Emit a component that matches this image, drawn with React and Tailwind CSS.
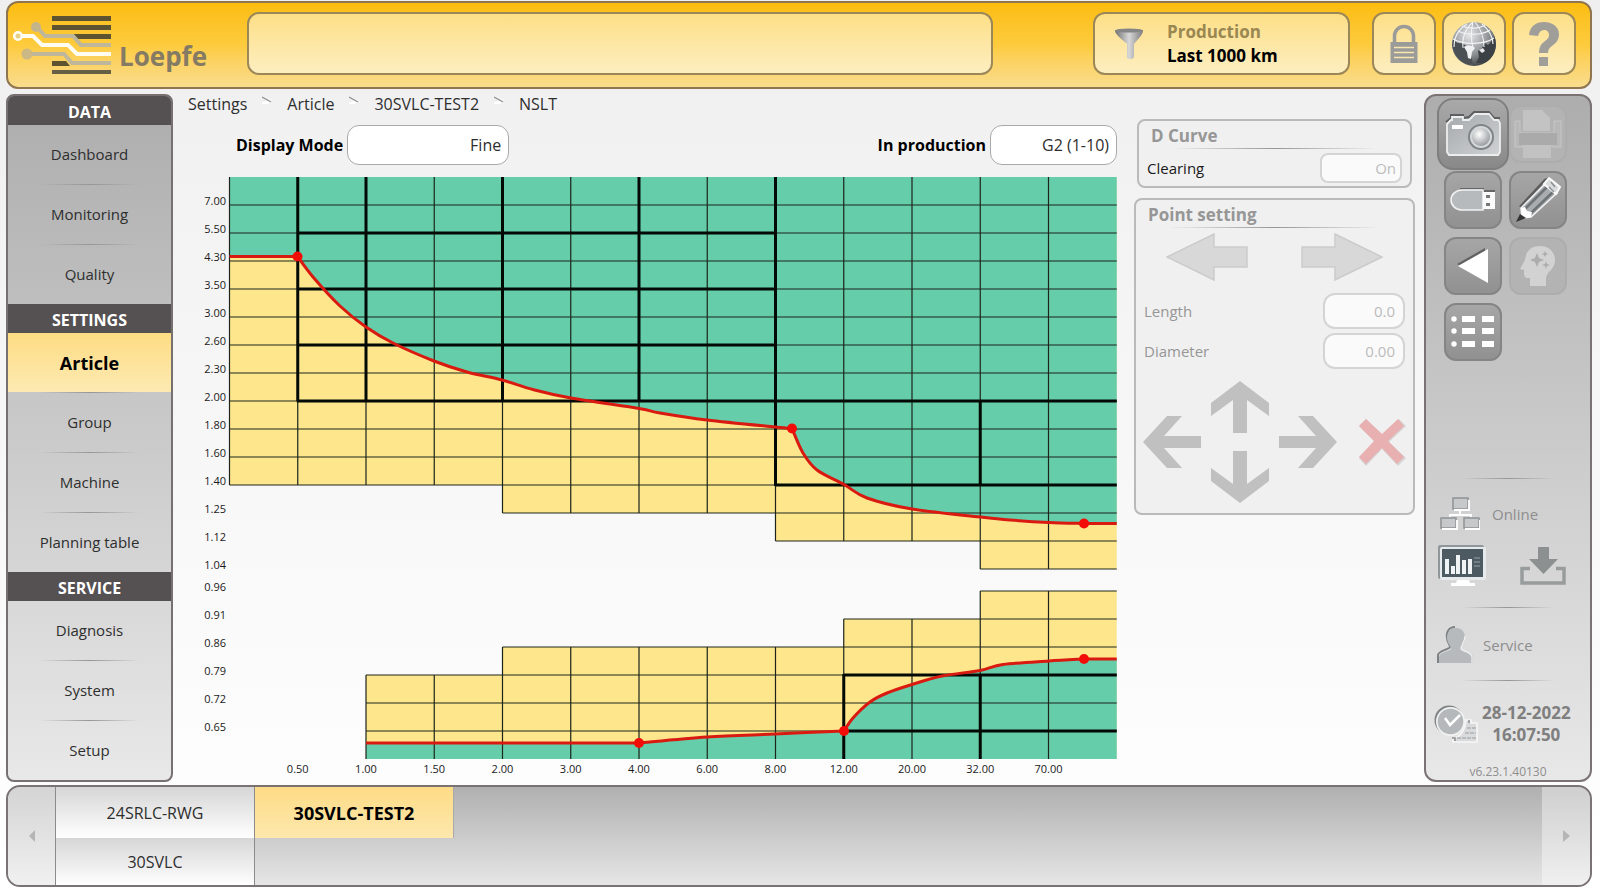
import React, { useState } from 'react';

const NAV = [
    { title: 'DATA', items: ['Dashboard', 'Monitoring', 'Quality'] },
    { title: 'SETTINGS', items: ['Article', 'Group', 'Machine', 'Planning table'] },
    { title: 'SERVICE', items: ['Diagnosis', 'System', 'Setup'] },
];

const CRUMBS = ['Settings', 'Article', '30SVLC-TEST2', 'NSLT'];

// Chart grid: 13 columns, 28 units per row
const colX = (i) => 41.5 + i * 68.25;
const upY = (i) => i * 28;
const lowY = (i) => 414 + i * 28;
const RIGHT = colX(13);
const BOTTOM = lowY(6);

const UPPER_LABELS = ['7.00', '5.50', '4.30', '3.50', '3.00', '2.60', '2.30', '2.00', '1.80', '1.60', '1.40', '1.25', '1.12', '1.04'];
const LOWER_LABELS = ['0.96', '0.91', '0.86', '0.79', '0.72', '0.65'];
const LENGTH_LABELS = ['0.50', '1.00', '1.50', '2.00', '3.00', '4.00', '6.00', '8.00', '12.00', '20.00', '32.00', '70.00'];

// first column, last column, rows
const UPPER_STEPS = [[0, 4, 11], [4, 8, 12], [8, 11, 13], [11, 13, 14]];
const LOWER_STEPS = [[2, 4, 3], [4, 9, 2], [9, 11, 1], [11, 13, 0]];

const UPPER_CURVE = [
    [[41.5, 79.5], [109.5, 79.5]],
    [[109.5, 79.5], [125, 100], [152, 129], [178, 150], [205, 166], [246, 184], [279, 195], [314, 203], [345, 212.5], [383, 221], [451, 231.5], [472, 236], [519, 243], [587, 250], [604, 251.5]],
    [[604, 251.5], [615, 276], [629, 293], [656, 307.5], [679, 321], [724, 332], [792, 340], [822, 343], [861, 345.5], [896, 346.5]],
    [[896, 346.5], [RIGHT, 346.5]],
];
const LOWER_CURVE = [
    [[178, 566], [451, 566]],
    [[451, 566], [519, 560], [587, 557], [656, 554]],
    [[656, 554], [665, 541], [682, 525], [699, 516], [724, 507.5], [754, 499], [792, 493.5], [815, 487.5], [861, 484], [896, 482]],
    [[896, 482], [RIGHT, 482]],
];

const curvePath = (segments) => {
    let d = `M${segments[0][0].join(' ')}`;
    segments.forEach((pts) => {
        for (let i = 0; i < pts.length - 1; i++) {
            const p0 = pts[i - 1] || pts[i];
            const p1 = pts[i];
            const p2 = pts[i + 1];
            const p3 = pts[i + 2] || p2;
            d += ` C${p1[0] + (p2[0] - p0[0]) / 6} ${p1[1] + (p2[1] - p0[1]) / 6} ${p2[0] - (p3[0] - p1[0]) / 6} ${p2[1] - (p3[1] - p1[1]) / 6} ${p2[0]} ${p2[1]}`;
        }
    });
    return d;
};

const upperPath = curvePath(UPPER_CURVE);
const lowerPath = curvePath(LOWER_CURVE);

const Chart = () => {
    const thin = [];
    UPPER_STEPS.forEach(([from, to, rows]) => {
        for (let c = from; c < to; c++) thin.push(`M${colX(c)} 0V${upY(rows)}`);
        for (let r = 1; r <= rows; r++) thin.push(`M${colX(from)} ${upY(r)}H${colX(to)}`);
    });
    LOWER_STEPS.forEach(([from, to, top]) => {
        for (let c = from; c < to; c++) thin.push(`M${colX(c)} ${lowY(top)}V${BOTTOM}`);
        for (let r = top; r < 6; r++) thin.push(`M${colX(from)} ${lowY(r)}H${colX(to)}`);
    });
    const thick = [
        ...[1, 2, 4, 6].map((c) => `M${colX(c)} 0V${upY(8)}`),
        `M${colX(8)} 0V${upY(11) + 1}`,
        ...[2, 4, 6].map((r) => `M${colX(1)} ${upY(r)}H${colX(8)}`),
        `M${colX(1) - 1} ${upY(8)}H${RIGHT}`,
        `M${colX(8)} ${upY(11)}H${RIGHT}`,
        `M${colX(11)} ${upY(8)}V${upY(11)}`,
        `M${colX(9)} ${lowY(3) - 1}V${BOTTOM}`,
        `M${colX(11)} ${lowY(3)}V${BOTTOM}`,
        `M${colX(9)} ${lowY(3)}H${RIGHT}`,
        `M${colX(9)} ${lowY(5)}H${RIGHT}`,
    ];

    return (
        <svg viewBox="0 0 929 602" className="w-full block" role="img" aria-label="Clearing chart">
            {UPPER_STEPS.map(([from, to, rows]) => (
                <rect key={from} x={colX(from)} y="0" width={colX(to) - colX(from)} height={upY(rows)} fill="#fde68c" />
            ))}
            {LOWER_STEPS.map(([from, to, top]) => (
                <rect key={from} x={colX(from)} y={lowY(top)} width={colX(to) - colX(from)} height={BOTTOM - lowY(top)} fill="#fde68c" />
            ))}
            <path d={`${upperPath} V0 H41.5 Z`} fill="#66cdaa" />
            <path d={`${lowerPath} V${BOTTOM} H178 Z`} fill="#66cdaa" />
            <path d={thin.join('')} stroke="#1c241c" strokeWidth="1.2" fill="none" />
            <path d={thick.join('')} stroke="#030a06" strokeWidth="3" fill="none" />
            <g stroke="#d91a10" strokeWidth="3" fill="none" strokeLinejoin="round">
                <path d={upperPath} />
                <path d={lowerPath} />
            </g>
            {[[109.5, 79.5], [604, 251.5], [896, 346.5], [451, 566], [656, 554], [896, 482]].map(([x, y]) => (
                <circle key={`${x}-${y}`} cx={x} cy={y} r="5" fill="#f20d08" />
            ))}
            <g fontSize="11" fill="#1a1a1a">
                {UPPER_LABELS.map((t, i) => <text key={t} x="38" y={upY(i + 1)} textAnchor="end">{t}</text>)}
                {LOWER_LABELS.map((t, i) => <text key={t} x="38" y={lowY(i)} textAnchor="end">{t}</text>)}
                {LENGTH_LABELS.map((t, i) => <text key={t} x={colX(i + 1)} y="596" textAnchor="middle">{t}</text>)}
            </g>
        </svg>
    );
};

const Logo = () => (
    <svg width="100" height="64" viewBox="0 0 100 64" className="shrink-0">
        <g fill="#5e5330">
            <rect x="40" y="4" width="59" height="5" />
            <rect x="40" y="13" width="59" height="5" />
            <path d="M61 22h38v5H65z" />
            <path d="M40 49h14l4 5H40z" />
            <rect x="40" y="58" width="59" height="4" fill="#655f45" />
        </g>
        <g fill="none" stroke="#bfb79c" strokeWidth="4">
            <path d="M25 15l8 9h28l8 9h30" />
            <path d="M18 42h34l8 9h39" />
        </g>
        <circle cx="24" cy="15" r="5" fill="#c4b48a" />
        <circle cx="15" cy="42" r="5.5" fill="#cbb884" />
        <path d="M8 24h13l9 9h26l9 9h34" fill="none" stroke="#fffdf2" strokeWidth="4" />
        <circle cx="6" cy="24" r="3.8" fill="#e8cf86" stroke="#fffdf2" strokeWidth="2.6" />
    </svg>
);

const FunnelIcon = () => (
    <svg width="28" height="32" viewBox="0 0 28 32">
        <defs>
            <linearGradient id="funnel" x1="0" x2="1">
                <stop offset="0" stopColor="#6f6f6f" />
                <stop offset="0.5" stopColor="#d8d8d8" />
                <stop offset="1" stopColor="#7c7c7c" />
            </linearGradient>
        </defs>
        <path d="M0 2h28c0 4-3 7-9 14v12c0 2-1 3-3 3s-4 0-4-2V16C4 9 0 6 0 2z" fill="url(#funnel)" />
        <ellipse cx="14" cy="2.5" rx="13.5" ry="2" fill="#858585" />
    </svg>
);

const LockIcon = () => (
    <svg width="28" height="40" viewBox="0 0 28 40">
        <path d="M4.500 19V12a9.500 9.500 0 0 1 19 0v7" fill="none" stroke="#9b9b99" strokeWidth="3.500" />
        <rect x="0.500" y="18" width="27" height="21" fill="#9b9b99" />
        <path d="M4 23.500h20M4 28.500h20M4 33.500h20" stroke="#f8e7ae" strokeWidth="1.600" />
    </svg>
);

const GlobeIcon = () => (
    <svg width="46" height="46" viewBox="0 0 46 46">
        <defs>
            <radialGradient id="globe" cx="0.4" cy="0.3" r="0.8">
                <stop offset="0" stopColor="#e4e6e7" />
                <stop offset="0.55" stopColor="#8e9295" />
                <stop offset="1" stopColor="#2d3236" />
            </radialGradient>
        </defs>
        <circle cx="23" cy="23" r="22" fill="url(#globe)" />
        <path d="M2 18c2 2 4 5 8 4l6 3 4 9 2 9-6 0C8 40 2 33 1 24z" fill="#4b5054" />
        <path d="M25 42l3-6-1-6 4-3 3-5 3 2 3-3 3-6c4 9 1 18-4 23-3 3-7 5-11 4z" fill="#3c4145" />
        <path d="M13 26c3-2 7-2 11 1l-3 4-1 7-3-1-1-6z" fill="#f0f1f2" />
        <path d="M28 29l4-2 2 3-3 2z" fill="#e8eaeb" />
        <g fill="none" stroke="#f2f3f4" strokeWidth="1.100">
            <path d="M7 10c8 4 23 5 32-1M2 18c11 6 31 6 41-1M11 5c7 3 17 3 23-1" />
            <path d="M22 1c-8 7-11 16-10 26M22 1c-2 8-2 18 0 26M24 1c6 7 9 16 9 25M16 3C8 8 3 16 3 26M31 3c7 6 11 12 11 20" />
        </g>
    </svg>
);

const HelpIcon = () => (
    <svg width="30" height="44" viewBox="0 0 30 44">
        <path d="M0 13C1 4 7 0 15 0c9 0 15 5 15 12 0 6-3 9-7 12-3 2-4 4-4 7h-9c0-6 2-9 6-12 3-2 4-4 4-6 0-3-2-5-5-5s-5 2-6 6z" fill="#a09e99" />
        <rect x="10" y="35" width="9" height="9" fill="#a09e99" />
    </svg>
);

const CameraIcon = () => (
    <svg width="56" height="46" viewBox="0 0 56 46">
        <defs>
            <linearGradient id="cam" x1="0" x2="1" y2="1">
                <stop offset="0" stopColor="#a5a9ac" />
                <stop offset="1" stopColor="#d0d2d4" />
            </linearGradient>
            <radialGradient id="lens" cx="0.4" cy="0.35" r="0.7">
                <stop offset="0" stopColor="#fff" />
                <stop offset="1" stopColor="#93989b" />
            </radialGradient>
        </defs>
        <path d="M1 11l5-4V4h12v3l6-1 5-5h15l5 6h6" fill="none" stroke="#5d5f61" strokeWidth="2" />
        <path d="M2 13l4-4h1V6h11v3h6l6-6h14l5 6h4l2 3v29l-2 3H4l-2-3z" fill="url(#cam)" stroke="#eceded" strokeWidth="1.800" />
        <rect x="7" y="14" width="11" height="4" fill="#fff" />
        <circle cx="36" cy="26" r="13" fill="#7f8487" />
        <circle cx="36" cy="26" r="11" fill="#d5d8da" />
        <circle cx="36" cy="26" r="9" fill="url(#lens)" />
    </svg>
);

const PrinterIcon = () => (
    <svg width="48" height="50" viewBox="0 0 48 50" className="opacity-60">
        <path d="M9 22V1h19l8 8v13" fill="#cfcfcf" />
        <path d="M1 12h5v12h34V12h7v26h-9v-4H9v4H1z" fill="#bcbcbc" stroke="#d4d4d4" />
        <rect x="5" y="24" width="38" height="12" fill="#a5a5a5" />
        <path d="M9 36h28v13H9z" fill="#cccccc" />
    </svg>
);

const UsbIcon = () => (
    <svg width="46" height="24" viewBox="0 0 46 24">
        <path d="M10 0h23v3h12" fill="none" stroke="#666" strokeWidth="2" />
        <path d="M33 2v20H13C5 22 1 17 1 12S5 2 13 2z" fill="#b7babc" stroke="#f1f1f1" strokeWidth="1.600" />
        <rect x="33" y="4" width="12" height="17" fill="#fbfbfb" />
        <rect x="36" y="7" width="4" height="3" fill="#777" />
        <rect x="36" y="15" width="4" height="3" fill="#777" />
    </svg>
);

const PencilIcon = () => (
    <svg width="46" height="46" viewBox="0 0 46 46">
        <path d="M5 30L30 3l5-2" fill="none" stroke="#5c5c5c" strokeWidth="2.500" />
        <path d="M6 31L31 6l11 10-26 24-9 1z" fill="#a9adb0" stroke="#f3f3f3" strokeWidth="1.500" />
        <path d="M10 32L33 9M15 37l24-23" stroke="#6e7376" strokeWidth="2.500" />
        <path d="M29 7l5-6 11 9-4 7z" fill="#d9dbdc" stroke="#fafafa" strokeWidth="2" />
        <path d="M34 10l5 5M36 5l4 5" stroke="#8b8f92" strokeWidth="1.500" />
        <path d="M6 31l4-1 2 4 5 1-1 5-9 1z" fill="#fff" />
        <path d="M1 45l4-8 6 4z" fill="#333" />
    </svg>
);

const BackIcon = () => (
    <svg width="32" height="36" viewBox="0 0 32 36">
        <path d="M0 16L28 0v4L4 18z" fill="#616161" />
        <path d="M1 18L31 1v34z" fill="#fff" />
    </svg>
);

const HeadIcon = () => (
    <svg width="36" height="42" viewBox="0 0 36 42">
        <path d="M10 41v-8H6l-2-3v-5l-4-1 5-9C6 5 12 1 20 1c10 0 15 7 15 14 0 6-3 9-7 13l-2 4v9z" fill="#d2d2d2" />
        <path d="M17 8l2 5 5 2-5 2-2 5-2-5-5-2 5-2zM26 16l1 3 3 1-3 1-1 3-1-3-3-1 3-1zM25 6l1 2 2 1-2 1-1 2-1-2-2-1 2-1z" fill="#acacac" />
    </svg>
);

const ListIcon = () => (
    <svg width="44" height="34" viewBox="0 0 44 34" fill="#fff">
        {[4, 16, 29].map((y) => (
            <g key={y}>
                <circle cx="3" cy={y} r="2.700" />
                <rect x="11" y={y - 3} width="13" height="6" />
                <rect x="31" y={y - 3} width="12" height="6" />
            </g>
        ))}
    </svg>
);

const NetworkIcon = () => (
    <svg width="40" height="34" viewBox="0 0 40 34">
        <g fill="#c6c8c9" stroke="#8f9294" strokeWidth="1.500">
            <rect x="13" y="1" width="15" height="11" />
            <rect x="1" y="21" width="15" height="10" />
            <rect x="24" y="21" width="15" height="10" />
        </g>
        <path d="M20 14v4M10 20v-2h21v2M14 13h15V3M2 32h15v-9M25 32h15v-9" fill="none" stroke="#fff" strokeWidth="1.800" />
    </svg>
);

const MonitorIcon = () => (
    <svg width="48" height="42" viewBox="0 0 48 42">
        <rect x="0" y="0" width="46" height="34" rx="2" fill="#8f979b" />
        <rect x="2" y="2" width="46" height="33" rx="2" fill="#e6eaec" />
        <rect x="4" y="4" width="41" height="28" fill="#4e5a62" />
        <path d="M7 14h4v15H7zM13 21h4v8h-4zM18 10h4v19h-4zM24 15h4v14h-4zM30 14h4v15h-4z" fill="#eff3f5" />
        <path d="M36 13h6M36 17h6M36 21h6" stroke="#93a1a9" />
        <path d="M19 35h12l1 3h5v3H13v-3h5z" fill="#fff" />
    </svg>
);

const DownloadIcon = () => (
    <svg width="46" height="38" viewBox="0 0 46 38">
        <path d="M10 21.500H2V36h42V21.500h-8" fill="none" stroke="#999c9c" strokeWidth="3.500" />
        <path d="M18 0h11v12h9L23.500 27 9 12h9z" fill="#8c9090" />
    </svg>
);

const UserIcon = () => (
    <svg width="36" height="38" viewBox="0 0 36 38">
        <path d="M18 1c-6 0-9 5-8 11 0 4 3 6 3 9 0 2-12 4-12 8v8" fill="none" stroke="#7f8284" strokeWidth="2" />
        <path d="M19 2c6 0 9 4 9 10 0 5-4 8-4 11 0 2 12 3 12 8v6H2v-6c0-5 12-6 12-8 0-3-4-6-4-11 0-6 3-10 9-10z" fill="#b7babc" />
        <path d="M28 10c0 6-4 9-4 13 0 2 11 3 11 8v6" fill="none" stroke="#f1f2f2" strokeWidth="1.200" />
    </svg>
);

const ClockIcon = () => (
    <svg width="44" height="40" viewBox="0 0 44 40" className="shrink-0">
        <circle cx="15" cy="16" r="14.500" fill="#7f8385" />
        <circle cx="16.500" cy="17.500" r="14.500" fill="#f1f2f2" />
        <circle cx="16.500" cy="17.500" r="12.800" fill="#b4b8ba" />
        <path d="M32 16h5v3h6v19H19v-3c7-2 12-8 13-19z" fill="#d9dadb" stroke="#f7f7f7" strokeWidth="1.500" />
        <path d="M33 24h9M31 29h11M23 34h19" stroke="#b9bbbc" strokeWidth="2" strokeDasharray="4 1" />
        <path d="M18 34h3v3M35 16v3" stroke="#8c8f91" strokeWidth="1.500" fill="none" />
        <path d="M11 14l5 7L26 11" fill="none" stroke="#fff" strokeWidth="2.500" />
    </svg>
);

const BlockArrow = ({ flip }) => (
    <svg width="82" height="48" viewBox="0 0 82 48" className={flip ? 'rotate-180' : ''}>
        <path d="M1 24L48 1v13h33v20H48v13z" fill="#d8d8d8" stroke="#cbcbcb" strokeWidth="1.500" />
    </svg>
);

const SideArrow = ({ flip }) => (
    <svg width="58" height="52" viewBox="0 0 58 52" className={flip ? 'rotate-180' : ''}>
        <path d="M0 26L24 0h15L21 20h37v12H21l18 20H24z" fill="#c0c0c0" />
    </svg>
);

const UprightArrow = ({ flip }) => (
    <svg width="58" height="52" viewBox="0 0 58 52" className={flip ? 'rotate-180' : ''}>
        <path d="M29 0L58 22v13L36 19v33H22V19L0 35V22z" fill="#c0c0c0" />
    </svg>
);

const CrumbMark = () => (
    <svg width="10" height="8" viewBox="0 0 10 8" className="-mt-2">
        <path d="M0 8L9 5" stroke="#fff" strokeWidth="3" />
        <path d="M0 1l9 5" stroke="#8f8f8f" strokeWidth="1.300" />
    </svg>
);

const Rule = ({ className = '' }) => (
    <div className={`h-px shrink-0 bg-linear-to-r from-transparent via-[#969696] to-transparent ${className}`} />
);

const TopBar = () => {
    const tile = 'border-2 border-[#9b8757] rounded-xl bg-linear-to-b from-[#fddf86] to-[#fdeec0]';
    return (
        <header className="h-[88px] flex items-center rounded-xl border-2 border-[#8f7650] bg-linear-to-b from-[#fcbd0b] via-[#fdcb3c] to-[#f9dd8c] pr-[14px] pb-[3px]">
            <div className="w-[239px] flex items-center pl-1">
                <Logo />
                <span className="text-[26px] leading-8 font-bold text-[#857a63] ml-[7px] mt-6">Loepfe</span>
            </div>
            <div className={`${tile} h-[63px] flex-1 mr-[100px]`} />
            <button className={`${tile} h-[63px] w-[257px] flex items-center gap-6 pl-5 mr-[22px] text-left`}>
                <FunnelIcon />
                <span className="text-[17px] leading-6 font-bold">
                    <span className="block text-[#9a8752]">Production</span>
                    <span className="block text-black">Last 1000 km</span>
                </span>
            </button>
            <div className="flex gap-[6px]">
                <button aria-label="Lock" className={`${tile} w-16 h-[63px] flex items-center justify-center`}><LockIcon /></button>
                <button aria-label="Language" className={`${tile} w-16 h-[63px] flex items-center justify-center`}><GlobeIcon /></button>
                <button aria-label="Help" className={`${tile} w-16 h-[63px] flex items-center justify-center`}><HelpIcon /></button>
            </div>
        </header>
    );
};

const Sidebar = ({ active, onSelect }) => (
    <nav className="w-[167px] shrink-0 flex flex-col rounded-lg border-2 border-[#777071] bg-linear-to-b from-[#adadad] to-[#e8e8e8] overflow-hidden">
        {NAV.map((group) => (
            <React.Fragment key={group.title}>
                <h2 className="h-[29px] shrink-0 bg-[#555152] text-white text-base leading-8 font-bold text-center">{group.title}</h2>
                {group.items.map((item, i) => (
                    <React.Fragment key={item}>
                        {i > 0 && active !== item && <Rule className="mx-8" />}
                        <button
                            onClick={() => onSelect(item)}
                            className={`flex-1 w-full text-center ${active === item ? 'bg-linear-to-b from-[#fddc82] to-[#fdeab2] text-lg font-bold text-black' : 'text-[15px] text-[#2e2e2e]'}`}
                        >
                            {item}
                        </button>
                    </React.Fragment>
                ))}
            </React.Fragment>
        ))}
    </nav>
);

const SettingsPanels = () => (
    <div className="w-[281px] shrink-0 pt-[25px]">
        <fieldset className="mx-[3px] h-[69px] rounded-lg border-2 border-[#bababa] bg-[#f0f0f0] pt-[3px]">
            <h3 className="text-[17px] leading-6 font-bold text-[#969696] pl-3">D Curve</h3>
            <Rule className="mx-8" />
            <div className="flex items-center justify-between pl-2 pr-2 mt-1">
                <label htmlFor="clearing" className="text-[15px] text-[#1a1a1a]">Clearing</label>
                <input id="clearing" disabled defaultValue="On" className="w-[82px] h-[30px] rounded-lg border-2 border-[#d4d4d4] bg-[#fafafa] text-[15px] text-right text-[#bcbcbc] pr-1" />
            </div>
        </fieldset>
        <fieldset className="mt-[10px] rounded-lg border-2 border-[#bababa] bg-[#f0f0f0] pt-[3px] pb-[10px] text-[#969696]">
            <h3 className="text-[17px] leading-6 font-bold pl-3">Point setting</h3>
            <Rule className="mx-8" />
            <div className="flex justify-between px-[30px] mt-[5px]">
                <button aria-label="Previous point"><BlockArrow /></button>
                <button aria-label="Next point"><BlockArrow flip /></button>
            </div>
            <div className="flex flex-col gap-1 mt-3 px-2 text-[15px]">
                <div className="flex items-center justify-between">
                    <label htmlFor="length">Length</label>
                    <input id="length" disabled defaultValue="0.0" className="w-[82px] h-9 rounded-xl border-2 border-[#d4d4d4] bg-[#fafafa] text-right text-[#bcbcbc] pr-2" />
                </div>
                <div className="flex items-center justify-between">
                    <label htmlFor="diameter">Diameter</label>
                    <input id="diameter" disabled defaultValue="0.00" className="w-[82px] h-9 rounded-xl border-2 border-[#d4d4d4] bg-[#fafafa] text-right text-[#bcbcbc] pr-2" />
                </div>
            </div>
            <div className="flex items-center px-[7px] mt-3">
                <button aria-label="Move left"><SideArrow /></button>
                <div className="flex flex-col gap-[18px] mx-[10px]">
                    <button aria-label="Move up"><UprightArrow /></button>
                    <button aria-label="Move down"><UprightArrow flip /></button>
                </div>
                <button aria-label="Move right"><SideArrow flip /></button>
                <button aria-label="Delete point" className="ml-auto">
                    <svg width="48" height="48" viewBox="0 0 48 48">
                        <path d="M8 1l17 16L41 1l7 7-17 16 17 16-8 8-16-17L8 48l-7-8 16-16L1 8z" fill="#d5d5d5" />
                        <path d="M8 1l16 15L40 1l6 7-16 15 16 16-7 7-15-16L8 46l-7-7 15-16L1 8z" fill="#e8b0b1" />
                    </svg>
                </button>
            </div>
        </fieldset>
    </div>
);

const ToolPanel = () => {
    const tool = 'w-[58px] h-[58px] rounded-xl border-2 border-[#858585] bg-linear-to-b from-[#a6a6a6] to-[#919191] flex items-center justify-center';
    const off = 'w-[58px] h-[58px] rounded-xl border-2 border-[#adadad] bg-[#b3b3b3] flex items-center justify-center';
    return (
        <aside className="w-[168px] shrink-0 flex flex-col rounded-xl border-2 border-[#7b7273] bg-linear-to-b from-[#adadad] to-[#e8e8e8] pt-[9px] text-[#8e8e8e]">
            <div className="grid grid-cols-2 gap-x-[7px] gap-y-2 w-[123px] ml-[18px]">
                <button aria-label="Screenshot" className="w-[72px] h-[72px] -m-[7px] rounded-2xl border-2 border-[#7e7e7e] bg-linear-to-b from-[#a9a9a9] to-[#898989] flex items-center justify-center"><CameraIcon /></button>
                <button aria-label="Print" disabled className={off}><PrinterIcon /></button>
                <button aria-label="USB" className={tool}><UsbIcon /></button>
                <button aria-label="Edit" className={tool}><PencilIcon /></button>
                <button aria-label="Back" className={tool}><BackIcon /></button>
                <button aria-label="Expert" disabled className={off}><HeadIcon /></button>
                <button aria-label="List" className={tool}><ListIcon /></button>
            </div>
            <div className="mt-auto flex flex-col text-[15px]">
                <Rule className="mx-9" />
                <div className="flex items-center gap-3 pl-[14px] mt-[18px]">
                    <NetworkIcon />
                    <span>Online</span>
                </div>
                <div className="flex items-center justify-between pl-3 pr-6 mt-[14px]">
                    <MonitorIcon />
                    <button aria-label="Download"><DownloadIcon /></button>
                </div>
                <Rule className="mx-9 mt-5" />
                <div className="flex items-center gap-[10px] pl-[11px] mt-[18px]">
                    <UserIcon />
                    <span>Service</span>
                </div>
                <Rule className="mx-9 mt-4" />
                <div className="flex items-center gap-1 pl-2 mt-[21px]">
                    <ClockIcon />
                    <div className="text-center text-[17px] leading-[22px] font-bold text-[#7f7f7f]">
                        <div>28-12-2022</div>
                        <div>16:07:50</div>
                    </div>
                </div>
                <div className="text-center text-xs mt-[18px]">v6.23.1.40130</div>
            </div>
        </aside>
    );
};

const ArticleBar = ({ article, onSelect }) => {
    const cell = (name) => article === name
        ? 'bg-linear-to-b from-[#fddc85] to-[#fde7ad] text-lg font-bold text-black border-r border-[#a9a9a9]'
        : 'bg-linear-to-b from-[#d6d6d6] to-white text-base text-[#2e2e2e] border-r border-[#8b8b8b]';
    return (
        <footer className="h-[102px] flex rounded-[14px] border-2 border-[#7b7273] bg-linear-to-b from-[#b0b0b0] to-[#e6e6e6] overflow-hidden">
            <button aria-label="Scroll left" className="w-12 border-r border-[#8b8b8b] bg-linear-to-b from-[#d4d4d4] to-[#f0f0f0] flex items-center justify-center">
                <svg width="6" height="12" viewBox="0 0 6 12"><path d="M6 0v12L0 6z" fill="#b5b5b5" /></svg>
            </button>
            <div className="grid grid-flow-col grid-rows-[51px_47px] auto-cols-[199px]">
                {['24SRLC-RWG', '30SVLC', '30SVLC-TEST2'].map((name) => (
                    <button key={name} onClick={() => onSelect(name)} className={cell(name)}>{name}</button>
                ))}
            </div>
            <button aria-label="Scroll right" className="ml-auto w-12 bg-linear-to-b from-[#cfcfcf] to-[#f0f0f0] flex items-center justify-center">
                <svg width="7" height="12" viewBox="0 0 7 12"><path d="M0 0v12l7-6z" fill="#b5b5b5" /></svg>
            </button>
        </footer>
    );
};

const App = () => {
    const [active, setActive] = useState('Article');
    const [article, setArticle] = useState('30SVLC-TEST2');

    return (
        <div className="min-h-screen flex flex-col pt-px pb-[6px] pl-[6px] pr-2 bg-linear-to-b from-[#f0eff0] to-white font-['Open_Sans','Noto_Sans',sans-serif]">
            <TopBar />
            <main className="flex-1 flex mt-[5px] mb-[3px]">
                <Sidebar active={active} onSelect={setActive} />
                <section className="flex-1 min-w-0 ml-[15px] mr-[17px]">
                    <nav className="flex items-center gap-[15px] h-5 text-base text-[#2e2e2e]">
                        {CRUMBS.map((crumb, i) => (
                            <React.Fragment key={crumb}>
                                {i > 0 && <CrumbMark />}
                                <a href="#">{crumb}</a>
                            </React.Fragment>
                        ))}
                    </nav>
                    <div className="flex items-center gap-1 mt-[11px] mb-3 pl-12 text-base">
                        <label htmlFor="mode" className="font-bold">Display Mode</label>
                        <input id="mode" readOnly value="Fine" className="w-[162px] h-10 rounded-xl border border-[#a9a9a9] bg-white text-right text-[#2e2e2e] pr-[7px]" />
                        <label htmlFor="production" className="ml-auto font-bold">In production</label>
                        <input id="production" readOnly value="G2 (1-10)" className="w-[127px] h-10 rounded-xl border border-[#a9a9a9] bg-white text-right text-[#2e2e2e] pr-[7px]" />
                    </div>
                    <Chart />
                </section>
                <SettingsPanels />
                <div className="w-[9px] shrink-0" />
                <ToolPanel />
            </main>
            <ArticleBar article={article} onSelect={setArticle} />
        </div>
    );
};

export default App;
